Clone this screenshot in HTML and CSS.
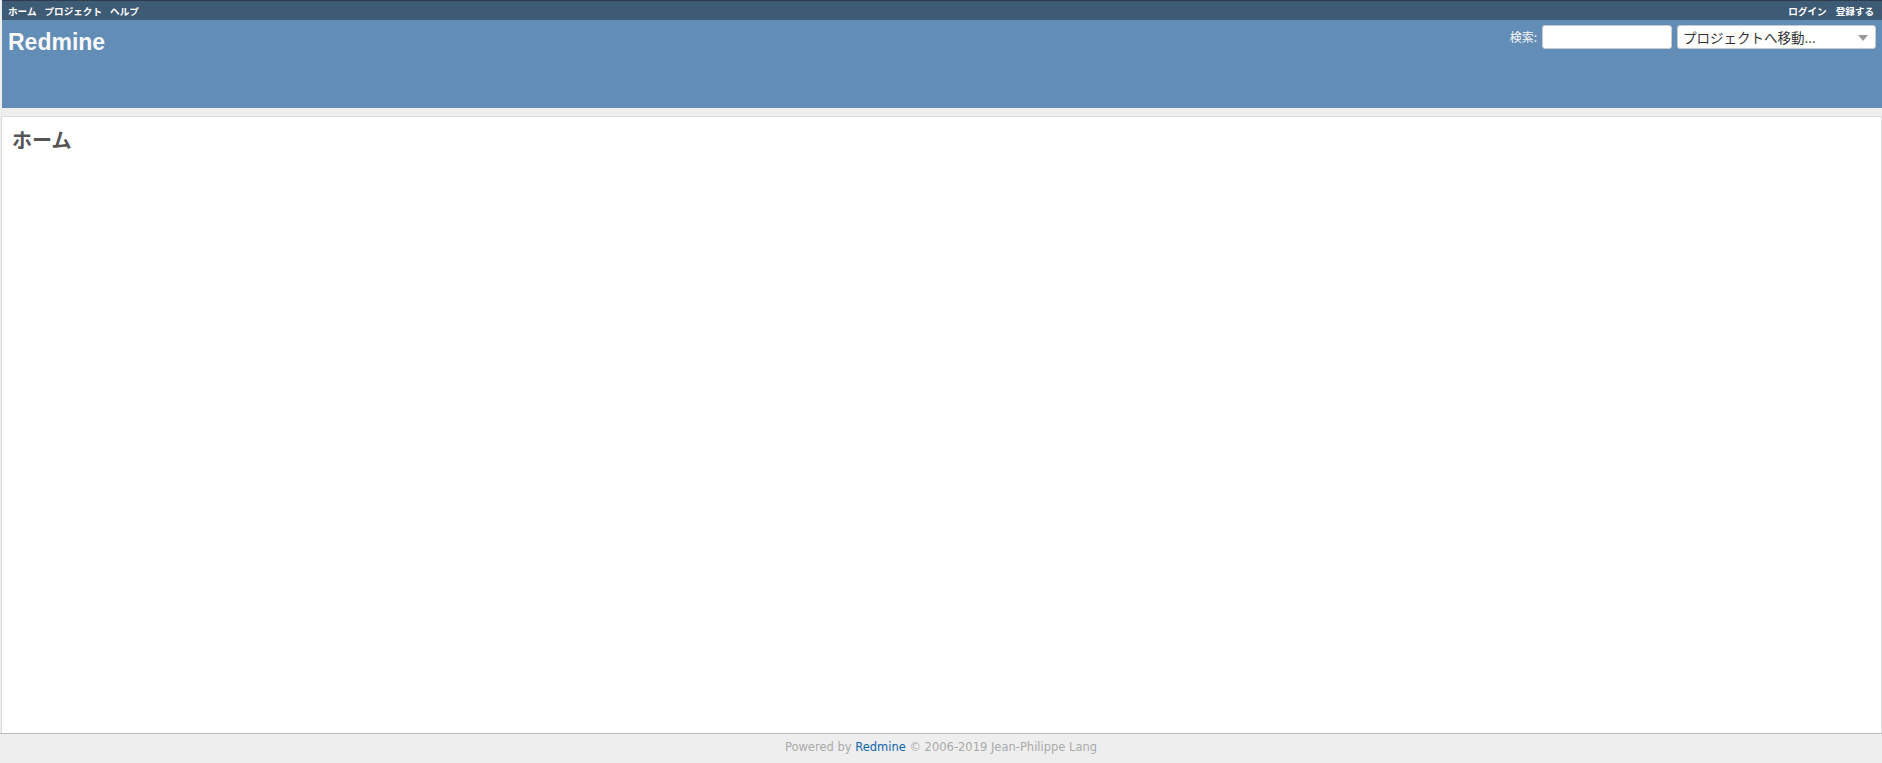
FILE: index.html
```html
<!DOCTYPE html>
<html lang="ja">
<head>
<meta charset="utf-8">
<title>Redmine</title>
<link rel="stylesheet" href="styles.css">
</head>
<body>
<div class="page">
  <div class="top-menu">
    <ul class="menu-left">
      <li><a href="#">ホーム</a></li>
      <li><a href="#">プロジェクト</a></li>
      <li><a href="#">ヘルプ</a></li>
    </ul>
    <ul class="menu-right">
      <li><a href="#">ログイン</a></li>
      <li><a href="#">登録する</a></li>
    </ul>
  </div>
  <div class="header">
    <h1 class="site-title">Redmine</h1>
    <form class="quick-search">
      <label class="search-label" for="q">検索:</label>
      <input class="search-input" id="q" type="text">
      <div class="jump-box">
        <span class="jump-text">プロジェクトへ移動...</span>
        <svg class="jump-arrow" width="10" height="6" viewBox="0 0 10 6"><path d="M0 0 H10 L5 6 Z" fill="#999"/></svg>
      </div>
    </form>
  </div>
  <div class="main">
    <div class="content">
      <h2 class="page-title">ホーム</h2>
    </div>
  </div>
  <div class="footer">
    Powered by <a href="#">Redmine</a> © 2006-2019 Jean-Philippe Lang
  </div>
</div>
</body>
</html>
```
FILE: styles.css
```css
html, body {
  margin: 0;
  padding: 0;
  height: 100%;
}
body {
  background: #eeeeee;
  font-family: "DejaVu Sans", Verdana, "Noto Sans CJK JP", sans-serif;
  font-size: 12px;
  color: #333;
}
.page {
  display: flex;
  flex-direction: column;
  height: 763px;
}
.top-menu {
  display: flex;
  justify-content: space-between;
  align-items: center;
  height: 19px;
  border-top: 1px solid #2b3d4f;
  background: #3e5b76;
  margin-left: 2px;
  padding: 0 0 0 6px;
  font-family: "Noto Sans CJK JP", "DejaVu Sans", sans-serif;
  font-size: 9.6px;
  font-weight: bold;
}
.menu-left, .menu-right {
  list-style: none;
  margin: 0;
  padding: 0;
  display: flex;
}
.top-menu a {
  color: #fff;
  text-decoration: none;
  margin-right: 8px;
  font-weight: bold;
}
.menu-right a {
  margin-right: 0;
  margin-left: 9px;
}
.menu-right {
  padding-right: 8px;
}
.header {
  display: flex;
  justify-content: space-between;
  align-items: flex-start;
  height: 88px;
  box-sizing: border-box;
  margin-left: 2px;
  background: #628db6;
  color: #f8f8f8;
  padding: 5px 6px 0 6px;
}
.site-title {
  margin: 3px 0 0 0;
  font-family: "Liberation Sans", Arial, sans-serif;
  font-size: 23px;
  font-weight: bold;
  line-height: 28px;
  color: #f8f8f8;
}
.quick-search {
  display: flex;
  align-items: center;
  gap: 5px;
  margin: 0;
}
.search-label {
  font-family: "Noto Sans CJK JP", sans-serif;
  font-size: 12px;
  color: #f8f8f8;
  margin-right: 0;
  position: relative;
  top: -1px;
}
.search-input {
  width: 130px;
  height: 24px;
  box-sizing: border-box;
  border: 1px solid #c8ccd0;
  border-radius: 3px;
  background: #fff;
  padding: 0 4px;
  margin: 0;
}
.jump-box {
  position: relative;
  display: flex;
  align-items: center;
  width: 199px;
  height: 24px;
  box-sizing: border-box;
  border: 1px solid #c8ccd0;
  border-radius: 3px;
  background: #fff;
  padding: 0 5px;
  font-family: "Noto Sans CJK JP", sans-serif;
  font-size: 13.5px;
  color: #333;
}
.jump-arrow {
  position: absolute;
  right: 7px;
  top: 9px;
}
.main {
  flex: 1;
  display: flex;
  padding-top: 8px;
  padding-left: 1px;
}
.content {
  flex: 1;
  background: #fff;
  border: 1px solid #dddddd;
  border-bottom: 0;
  padding: 10px 10px;
}
.page-title {
  margin: 0;
  font-family: "Noto Sans CJK JP", "DejaVu Sans", sans-serif;
  font-size: 20px;
  font-weight: bold;
  color: #555;
  line-height: 26px;
}
.footer {
  height: 29px;
  border-top: 1px solid #bbbbbb;
  background: #eeeeee;
  color: #aaa;
  font-size: 11.5px;
  text-align: center;
  line-height: 27px;
}
.footer a {
  color: #1166aa;
  text-decoration: none;
}
```
